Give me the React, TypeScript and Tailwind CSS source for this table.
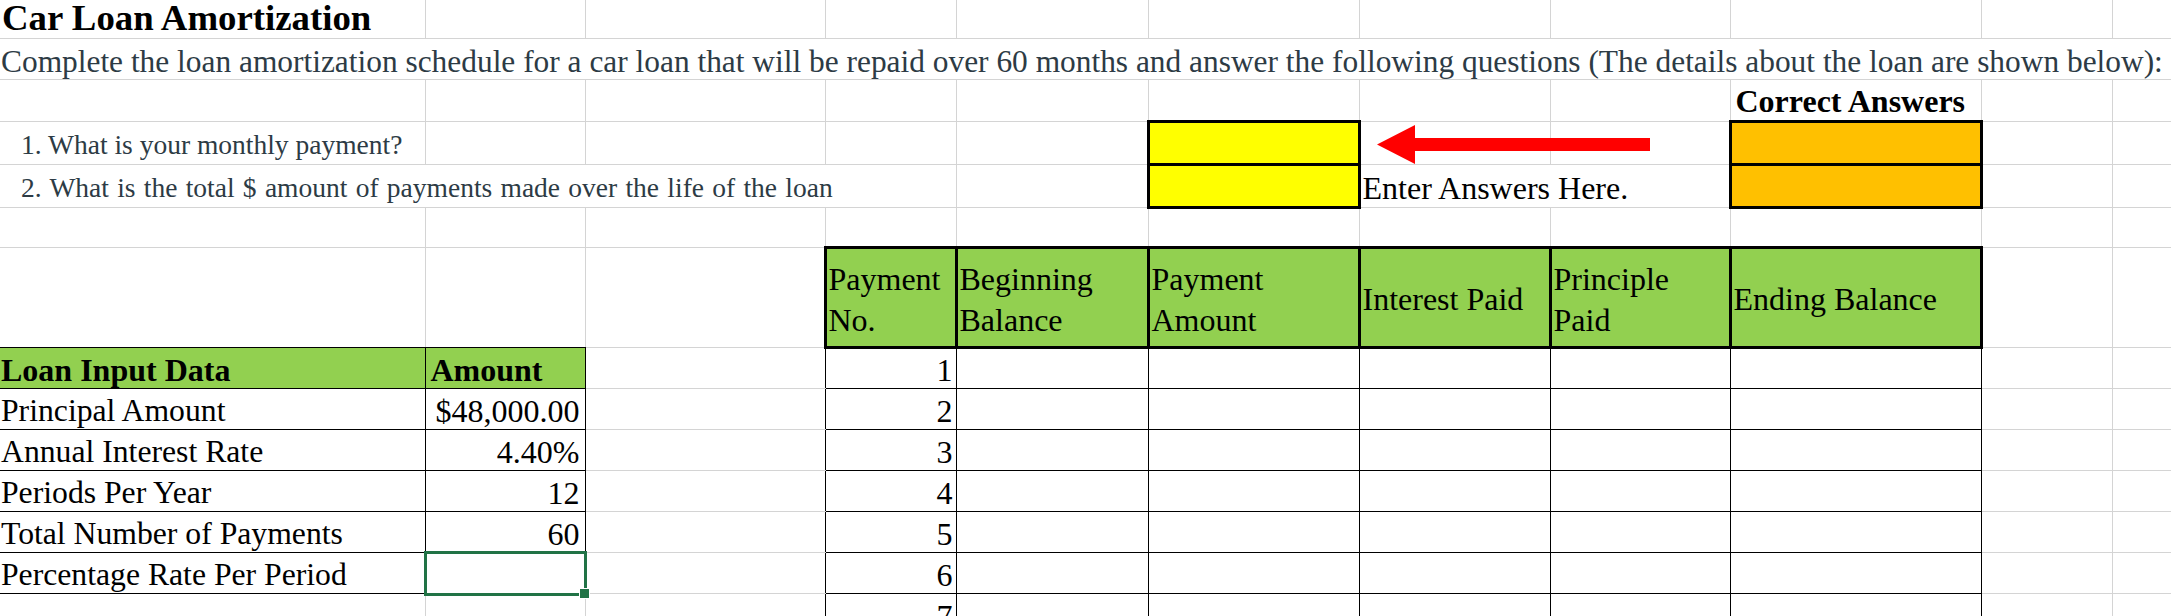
const grid = 'border-r border-b border-[#d4d4d4]'
const inkCell = 'border-r border-b border-black'
const headCell =
  'border-[3px] border-black bg-[#92d050] align-middle pl-[2px] pt-[4px] text-[32px] leading-[41px] text-black'

const loanRows = [
  { label: 'Principal Amount', value: '$48,000.00' },
  { label: 'Annual Interest Rate', value: '4.40%' },
  { label: 'Periods Per Year', value: '12' },
  { label: 'Total Number of Payments', value: '60' },
  { label: 'Percentage Rate Per Period', value: '' },
]

function Blank({ n }: { n: number }) {
  return (
    <>
      {Array.from({ length: n }).map((_, i) => (
        <td key={i} className={grid} />
      ))}
    </>
  )
}

function RedArrow() {
  return (
    <svg
      className="absolute left-[16px] top-[3px] pointer-events-none"
      width="273"
      height="39"
      viewBox="0 0 273 39"
    >
      <polygon points="0,19.5 38,0 38,13 273,13 273,26 38,26 38,39" fill="#ff0000" />
    </svg>
  )
}

function SelectedCell() {
  return (
    <div className="absolute -left-[2px] -right-[2px] -top-[2px] -bottom-[3px] border-[3px] border-[#217346]">
      <div className="absolute -right-[5px] -bottom-[5px] w-[9px] h-[9px] bg-[#217346] ring-1 ring-white" />
    </div>
  )
}

export default function App() {
  return (
    <div className="w-[2171px] h-[616px] overflow-hidden bg-white font-['Liberation_Serif','Times_New_Roman',serif]">
      <table className="border-collapse table-fixed w-[2312px]">
        <colgroup>
          <col className="w-[425px]" />
          <col className="w-[160px]" />
          <col className="w-[240px]" />
          <col className="w-[131px]" />
          <col className="w-[192px]" />
          <col className="w-[211px]" />
          <col className="w-[191px]" />
          <col className="w-[180px]" />
          <col className="w-[251px]" />
          <col className="w-[131px]" />
          <col className="w-[200px]" />
        </colgroup>
        <tbody>
          {/* 1: title */}
          <tr className="h-[38px]">
            <td className="border-r border-b border-[#d4d4d4] align-bottom pl-[2px] pb-[2px] text-[36.8px] leading-[36px] font-bold text-black whitespace-nowrap">
              Car Loan Amortization
            </td>
            <Blank n={10} />
          </tr>

          {/* 2: instructions */}
          <tr className="h-[41px]">
            <td
              colSpan={11}
              className="border-b border-[#d4d4d4] align-bottom pl-[1px] pb-[1px] text-[31.4px] leading-[32px] text-[#2d3b45] whitespace-nowrap"
            >
              Complete the loan amortization schedule for a car loan that will be repaid over 60
              months and answer the following questions (The details about the loan are shown
              below):
            </td>
          </tr>

          {/* 3: correct answers label */}
          <tr className="h-[42px]">
            <Blank n={8} />
            <td className="border-r border-b border-[#d4d4d4] align-bottom pl-[5px] pb-[3px] text-[32px] leading-[32px] font-bold text-black whitespace-nowrap">
              Correct Answers
            </td>
            <Blank n={2} />
          </tr>

          {/* 4: question 1 */}
          <tr className="h-[43px]">
            <td className="border-r border-b border-[#d4d4d4] align-bottom pl-[21px] pb-[3px] text-[27.5px] leading-[32px] text-[#2d3b45] whitespace-nowrap">
              1. What is your monthly payment?
            </td>
            <Blank n={4} />
            <td className="border-[3px] border-black bg-[#ffff00]" />
            <td className="border-r border-b border-[#d4d4d4] relative">
              <RedArrow />
            </td>
            <td className={grid} />
            <td className="border-[3px] border-black bg-[#ffc000]" />
            <Blank n={2} />
          </tr>

          {/* 5: question 2 */}
          <tr className="h-[43px]">
            <td
              colSpan={4}
              className="border-r border-b border-[#d4d4d4] align-bottom pl-[21px] pb-[3px] text-[27.5px] leading-[32px] text-[#2d3b45] whitespace-nowrap [word-spacing:1.4px]"
            >
              2. What is the total $ amount of payments made over the life of the loan
            </td>
            <td className={grid} />
            <td className="border-[3px] border-black bg-[#ffff00]" />
            <td
              colSpan={2}
              className="border-r border-b border-[#d4d4d4] align-bottom pl-[2px] pb-[3px] text-[32px] leading-[32px] text-black whitespace-nowrap"
            >
              Enter Answers Here.
            </td>
            <td className="border-[3px] border-black bg-[#ffc000]" />
            <Blank n={2} />
          </tr>

          {/* 6: spacer */}
          <tr className="h-[40px]">
            <Blank n={11} />
          </tr>

          {/* 7: schedule header */}
          <tr className="h-[100px]">
            <td className="border-r border-b border-r-[#d4d4d4] border-b-black" />
            <td className="border-r border-b border-r-[#d4d4d4] border-b-black" />
            <td className={grid} />
            <td className={headCell}>
              Payment
              <br />
              No.
            </td>
            <td className={headCell}>
              Beginning
              <br />
              Balance
            </td>
            <td className={headCell}>
              Payment
              <br />
              Amount
            </td>
            <td className={headCell}>Interest Paid</td>
            <td className={headCell}>
              Principle
              <br />
              Paid
            </td>
            <td className={headCell}>Ending Balance</td>
            <Blank n={2} />
          </tr>

          {/* 8: loan header + payment 1 */}
          <tr className="h-[41px]">
            <td className="border-r border-b border-black bg-[#92d050] align-bottom pl-[1px] pb-[2px] text-[32px] leading-[32px] font-bold text-black whitespace-nowrap">
              Loan Input Data
            </td>
            <td className="border-r border-b border-black bg-[#92d050] align-bottom pl-[5px] pb-[2px] text-[32px] leading-[32px] font-bold text-black whitespace-nowrap">
              Amount
            </td>
            <td className="border-r border-b border-r-black border-b-[#d4d4d4]" />
            <td className="border-r border-b border-black align-bottom text-right pr-[3px] pb-[2px] text-[32px] leading-[32px] text-black">
              1
            </td>
            <td className={inkCell} />
            <td className={inkCell} />
            <td className={inkCell} />
            <td className={inkCell} />
            <td className={inkCell} />
            <Blank n={2} />
          </tr>

          {loanRows.map((row, i) => (
            <tr key={row.label} className="h-[41px]">
              <td className="border-r border-b border-black align-bottom pl-[1px] pb-[2px] text-[31.7px] leading-[32px] text-black whitespace-nowrap">
                {row.label}
              </td>
              <td className="border-r border-b border-black align-bottom text-right pr-[5px] pb-[2px] text-[32px] leading-[32px] text-black whitespace-nowrap relative">
                {row.value}
                {i === loanRows.length - 1 && <SelectedCell />}
              </td>
              <td className="border-r border-b border-r-black border-b-[#d4d4d4]" />
              <td className="border-r border-b border-black align-bottom text-right pr-[3px] pb-[2px] text-[32px] leading-[32px] text-black">
                {i + 2}
              </td>
              <td className={inkCell} />
              <td className={inkCell} />
              <td className={inkCell} />
              <td className={inkCell} />
              <td className={inkCell} />
              <Blank n={2} />
            </tr>
          ))}

          {/* 14: payment 7, cut off by the window */}
          <tr className="h-[41px]">
            <td className={grid} />
            <td className={grid} />
            <td className="border-r border-b border-r-black border-b-[#d4d4d4]" />
            <td className="border-r border-b border-black align-bottom text-right pr-[3px] pb-[2px] text-[32px] leading-[32px] text-black">
              7
            </td>
            <td className={inkCell} />
            <td className={inkCell} />
            <td className={inkCell} />
            <td className={inkCell} />
            <td className={inkCell} />
            <Blank n={2} />
          </tr>
        </tbody>
      </table>
    </div>
  )
}
